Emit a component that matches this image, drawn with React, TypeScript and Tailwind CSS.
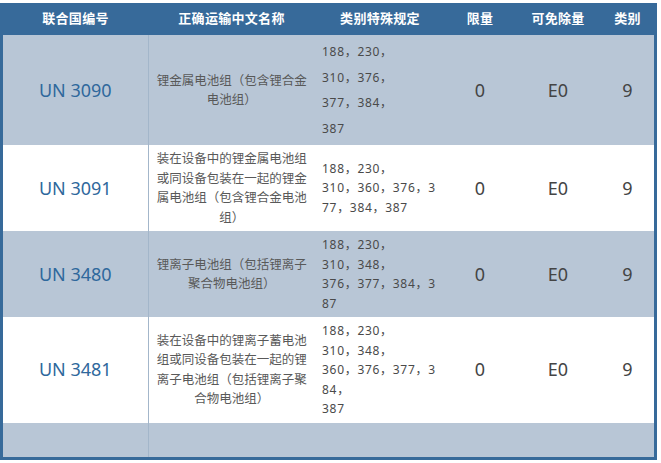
import React from 'react';

type Row = {
  un: string;
  name: string;
  special: string[];
  tall?: boolean;
};

const rows: Row[] = [
  {
    un: 'UN 3090',
    name: '锂金属电池组（包含锂合金电池组）',
    special: ['188，230，', '310，376，', '377，384，', '387'],
    tall: true,
  },
  {
    un: 'UN 3091',
    name: '装在设备中的锂金属电池组或同设备包装在一起的锂金属电池组（包含锂合金电池组）',
    special: ['188，230，', '310，360，376，377，384，387'],
  },
  {
    un: 'UN 3480',
    name: '锂离子电池组（包括锂离子聚合物电池组）',
    special: ['188，230，', '310，348，', '376，377，384，387'],
  },
  {
    un: 'UN 3481',
    name: '装在设备中的锂离子蓄电池组或同设备包装在一起的锂离子电池组（包括锂离子聚合物电池组）',
    special: ['188，230，', '310，348，', '360，376，377，384，', '387'],
  },
];

const font = { fontFamily: '"Noto Sans", "Noto Sans CJK SC", sans-serif' };

export default function App() {
  return (
    <div className="min-h-[463px] w-[661px] bg-white pt-[3px]" style={font}>
      <div className="w-[657px] border-[3px] border-t-0 border-[#376a9a]">
        <table className="w-full table-fixed border-collapse">
          <colgroup>
            <col className="w-[145px]" />
            <col className="w-[167px]" />
            <col className="w-[130px]" />
            <col className="w-[70px]" />
            <col className="w-[86px]" />
            <col className="w-[53px]" />
          </colgroup>
          <thead>
            <tr className="h-[32px] bg-[#376a9a] text-[13px] font-bold tracking-[0.3px] text-white">
              <th className="font-bold">联合国编号</th>
              <th className="font-bold">正确运输中文名称</th>
              <th className="font-bold">类别特殊规定</th>
              <th className="font-bold">限量</th>
              <th className="font-bold">可免除量</th>
              <th className="font-bold">类别</th>
            </tr>
          </thead>
          <tbody>
            {rows.map((r, i) => (
              <tr key={r.un} className={i % 2 === 0 ? 'bg-[#b8c6d6]' : 'bg-white'}>
                <td className="border-r border-[#a3b6ca] text-center text-[18px] text-[#2f689c]">{r.un}</td>
                <td className="px-[8px] py-[4px] text-center text-[12.5px] leading-[19.5px] text-[#595959]">
                  {r.name}
                </td>
                <td
                  className={
                    'py-[4px] pl-[7px] pr-[4px] text-[12px] tracking-[0.7px] break-all text-[#4a4a4a] ' +
                    (r.tall ? 'leading-[25.5px]' : 'leading-[19.5px]')
                  }
                >
                  {r.special.map((s, j) => (
                    <div key={j}>{s}</div>
                  ))}
                </td>
                <td className="text-center text-[18px] text-[#444]">0</td>
                <td className="text-center text-[18px] text-[#444]">E0</td>
                <td className="text-center text-[18px] text-[#444]">9</td>
              </tr>
            ))}
            <tr className="h-[34px] bg-[#b8c6d6]">
              <td className="border-r border-[#a3b6ca]"></td>
              <td></td>
              <td></td>
              <td></td>
              <td></td>
              <td></td>
            </tr>
          </tbody>
        </table>
      </div>
    </div>
  );
}
